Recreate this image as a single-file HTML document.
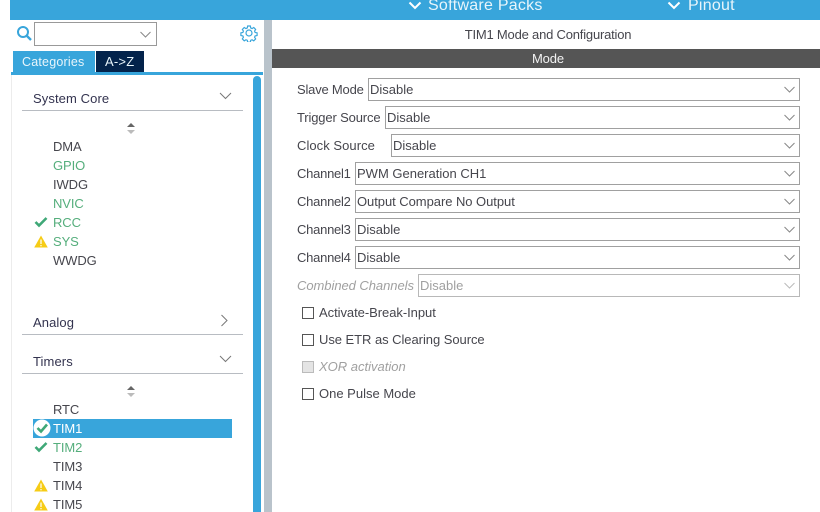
<!DOCTYPE html>
<html><head><meta charset="utf-8">
<style>
html,body{margin:0;padding:0;background:#fff}
#p{position:relative;width:820px;height:512px;overflow:hidden;background:#fff;font-family:"Liberation Sans",sans-serif;font-size:13px;color:#46464d;letter-spacing:-.1px}
#p div,#p svg{position:absolute}
.t{white-space:nowrap;line-height:16px;margin-top:1px}
.sel{left:0;height:21px;border:1px solid #a0a0a0;background:#fff;box-sizing:border-box}
.sv{white-space:nowrap;line-height:16px;color:#46464d;letter-spacing:0;margin-top:1px}
.g{color:#55ae7c}
.h{color:#33334f;font-size:13px;letter-spacing:.1px;margin-top:0}
.top{margin-top:0;font-size:16px;color:#e8f5fb;letter-spacing:.25px}
.ln{left:22px;width:221px;height:1px;background:#b8bcc2}
.cb{left:302px;width:12px;height:12px;border:1px solid #555;box-sizing:border-box;background:#fff}
</style></head><body><div id="p">
<div style="left:10px;top:0;width:810px;height:20px;background:#38a5db"></div>
<svg style="left:408px;top:1px" width="14" height="10"><path d="M1.5 1.5L7 7L12.5 1.5" fill="none" stroke="#fff" stroke-width="2"/></svg>
<div class="t top" style="left:428px;top:-2px">Software Packs</div>
<svg style="left:667px;top:1px" width="14" height="10"><path d="M1.5 1.5L7 7L12.5 1.5" fill="none" stroke="#fff" stroke-width="2"/></svg>
<div class="t top" style="left:688px;top:-2px">Pinout</div>

<svg style="left:16px;top:25px" width="17" height="17"><circle cx="7" cy="7" r="5" fill="none" stroke="#38a5db" stroke-width="2"/><path d="M10.5 10.5L15 15" stroke="#38a5db" stroke-width="2.4"/></svg>
<div style="left:34px;top:22px;width:123px;height:24px;border:1px solid #999;box-sizing:border-box"></div>
<svg style="left:140px;top:30px" width="12" height="8"><path d="M.5 2L5.5 7L10.5 2" fill="none" stroke="#888" stroke-width="1"/></svg>
<svg style="left:240px;top:24px" width="18" height="18" viewBox="0 0 18 18"><circle cx="9" cy="9" r="3" fill="none" stroke="#38a5db" stroke-width="1.2"/><path d="M7.5 1.2h3l.4 2.2 1.5.7 1.9-1.2 2.1 2.1-1.2 1.9.6 1.5 2.2.4v0 3l-2.2.4-.6 1.5 1.2 1.9-2.1 2.1-1.9-1.2-1.5.6-.4 2.2h-3l-.4-2.2-1.5-.6-1.9 1.2-2.1-2.1 1.2-1.9-.6-1.5-2.2-.4v-3l2.2-.4.6-1.5-1.2-1.9 2.1-2.1 1.9 1.2 1.5-.7z" transform="translate(.9 .9) scale(.9)" fill="none" stroke="#38a5db" stroke-width="1.3"/></svg>

<div style="left:13px;top:51px;width:82px;height:21px;background:#38a5db"></div>
<div class="t" style="left:22px;top:53px;color:#e8f5fb;font-size:12.5px;letter-spacing:.2px">Categories</div>
<div style="left:96px;top:51px;width:48px;height:21px;background:#03234b"></div>
<div class="t" style="left:105px;top:53px;color:#e8f5fb;letter-spacing:.2px">A-&gt;Z</div>
<div style="left:11px;top:72px;width:252px;height:3px;background:#38a5db"></div>
<div style="left:11px;top:75px;width:1px;height:437px;background:#ececec"></div>
<div style="left:253px;top:76px;width:8px;height:436px;background:#38a5db;border-radius:4px 4px 0 0"></div>
<div style="left:264px;top:20px;width:8px;height:492px;background:#b9c3cb"></div>

<div class="t h" style="left:33px;top:91px">System Core</div>
<svg style="left:219px;top:92px" width="13" height="9"><path d="M1 1L6.5 6.5L12 1" fill="none" stroke="#777" stroke-width="1"/></svg>
<div class="ln" style="top:110px"></div>
<svg style="left:126px;top:122px" width="10" height="13"><path d="M1 5L5 1L9 5z" fill="#666"/><path d="M1 8L5 12L9 8z" fill="#bbb"/></svg>
<div class="t" style="left:53px;top:138px">DMA</div>
<div class="t g" style="left:53px;top:157px">GPIO</div>
<div class="t" style="left:53px;top:176px">IWDG</div>
<div class="t g" style="left:53px;top:195px">NVIC</div>
<div class="t g" style="left:53px;top:214px">RCC</div>
<div class="t g" style="left:53px;top:233px">SYS</div>
<div class="t" style="left:53px;top:252px">WWDG</div>
<svg style="left:34px;top:216px" width="14" height="12"><path d="M1.5 6L5 9.5L12.5 2" fill="none" stroke="#3fa877" stroke-width="2.6"/></svg>
<svg style="left:34px;top:235px" width="14" height="13"><path d="M7 .5L13.8 12.5H.2z" fill="#f6cc16"/><rect x="6.4" y="4.5" width="1.2" height="4.5" fill="#fff"/><rect x="6.4" y="10" width="1.2" height="1.3" fill="#fff"/></svg>

<div class="t h" style="left:33px;top:315px">Analog</div>
<svg style="left:220px;top:314px" width="9" height="13"><path d="M1.5 1L7 6.5L1.5 12" fill="none" stroke="#777" stroke-width="1"/></svg>
<div class="ln" style="top:334px"></div>
<div class="t h" style="left:33px;top:354px">Timers</div>
<svg style="left:219px;top:355px" width="13" height="9"><path d="M1 1L6.5 6.5L12 1" fill="none" stroke="#777" stroke-width="1"/></svg>
<div class="ln" style="top:373px"></div>
<svg style="left:126px;top:385px" width="10" height="13"><path d="M1 5L5 1L9 5z" fill="#666"/><path d="M1 8L5 12L9 8z" fill="#bbb"/></svg>
<div class="t" style="left:53px;top:401px">RTC</div>
<div style="left:33px;top:419px;width:199px;height:19px;background:#38a5db"></div>
<svg style="left:33px;top:419px" width="18" height="18"><circle cx="9" cy="9" r="8.5" fill="#fff"/><path d="M4.5 9L8 12.5L14 5.5" fill="none" stroke="#3fa877" stroke-width="2.6"/></svg>
<div class="t" style="left:53px;top:420px;color:#fff">TIM1</div>
<svg style="left:34px;top:441px" width="14" height="12"><path d="M1.5 6L5 9.5L12.5 2" fill="none" stroke="#3fa877" stroke-width="2.6"/></svg>
<div class="t g" style="left:53px;top:439px">TIM2</div>
<div class="t" style="left:53px;top:458px">TIM3</div>
<svg style="left:34px;top:479px" width="14" height="13"><path d="M7 .5L13.8 12.5H.2z" fill="#f6cc16"/><rect x="6.4" y="4.5" width="1.2" height="4.5" fill="#fff"/><rect x="6.4" y="10" width="1.2" height="1.3" fill="#fff"/></svg>
<div class="t" style="left:53px;top:477px">TIM4</div>
<svg style="left:34px;top:498px" width="14" height="13"><path d="M7 .5L13.8 12.5H.2z" fill="#f6cc16"/><rect x="6.4" y="4.5" width="1.2" height="4.5" fill="#fff"/><rect x="6.4" y="10" width="1.2" height="1.3" fill="#fff"/></svg>
<div class="t" style="left:53px;top:496px">TIM5</div>

<div class="t" style="left:272px;top:26px;width:552px;text-align:center;letter-spacing:-.2px">TIM1 Mode and Configuration</div>
<div style="left:272px;top:49px;width:548px;height:19px;background:#555"></div>
<div class="t" style="left:272px;top:50px;width:552px;text-align:center;color:#f2f2f2">Mode</div>

<div class="t" style="left:297px;top:81px;letter-spacing:-.2px">Slave Mode</div>
<div class="sel" style="left:368px;top:78px;width:432px;height:23px"></div>
<div class="sv" style="left:370px;top:81px">Disable</div>
<div class="t" style="left:297px;top:109px;letter-spacing:-.15px">Trigger Source</div>
<div class="sel" style="left:385px;top:106px;width:415px;height:23px"></div>
<div class="sv" style="left:387px;top:109px">Disable</div>
<div class="t" style="left:297px;top:137px;letter-spacing:.05px">Clock Source</div>
<div class="sel" style="left:391px;top:134px;width:409px;height:23px"></div>
<div class="sv" style="left:393px;top:137px">Disable</div>
<div class="t" style="left:297px;top:165px;letter-spacing:-.25px">Channel1</div>
<div class="sel" style="left:355px;top:162px;width:445px;height:23px"></div>
<div class="sv" style="left:357px;top:165px">PWM Generation CH1</div>
<div class="t" style="left:297px;top:193px;letter-spacing:-.25px">Channel2</div>
<div class="sel" style="left:355px;top:190px;width:445px;height:23px"></div>
<div class="sv" style="left:357px;top:193px;letter-spacing:-.05px">Output Compare No Output</div>
<div class="t" style="left:297px;top:221px;letter-spacing:-.25px">Channel3</div>
<div class="sel" style="left:355px;top:218px;width:445px;height:23px"></div>
<div class="sv" style="left:357px;top:221px">Disable</div>
<div class="t" style="left:297px;top:249px;letter-spacing:-.25px">Channel4</div>
<div class="sel" style="left:355px;top:246px;width:445px;height:23px"></div>
<div class="sv" style="left:357px;top:249px">Disable</div>
<div class="t" style="left:297px;top:277px;color:#a0a0a0;font-style:italic;letter-spacing:-.05px">Combined Channels</div>
<div class="sel" style="left:418px;top:274px;width:382px;height:23px;border-color:#b8b8b8"></div>
<div class="sv" style="left:420px;top:277px;color:#a0a0a0">Disable</div>

<svg style="left:784px;top:85px" width="12" height="8"><path d="M.5 2L5.5 7L10.5 2" fill="none" stroke="#888"/></svg>
<svg style="left:784px;top:113px" width="12" height="8"><path d="M.5 2L5.5 7L10.5 2" fill="none" stroke="#888"/></svg>
<svg style="left:784px;top:141px" width="12" height="8"><path d="M.5 2L5.5 7L10.5 2" fill="none" stroke="#888"/></svg>
<svg style="left:784px;top:169px" width="12" height="8"><path d="M.5 2L5.5 7L10.5 2" fill="none" stroke="#888"/></svg>
<svg style="left:784px;top:197px" width="12" height="8"><path d="M.5 2L5.5 7L10.5 2" fill="none" stroke="#888"/></svg>
<svg style="left:784px;top:225px" width="12" height="8"><path d="M.5 2L5.5 7L10.5 2" fill="none" stroke="#888"/></svg>
<svg style="left:784px;top:253px" width="12" height="8"><path d="M.5 2L5.5 7L10.5 2" fill="none" stroke="#888"/></svg>
<svg style="left:784px;top:281px" width="12" height="8"><path d="M.5 2L5.5 7L10.5 2" fill="none" stroke="#bbb"/></svg>

<div class="cb" style="top:307px"></div>
<div class="t" style="left:319px;top:304px;letter-spacing:-.05px">Activate-Break-Input</div>
<div class="cb" style="top:334px"></div>
<div class="t" style="left:319px;top:331px;letter-spacing:-.05px">Use ETR as Clearing Source</div>
<div class="cb" style="top:361px;background:#e4e4e4;border-color:#bbb"></div>
<div class="t" style="left:319px;top:358px;color:#a0a0a0;font-style:italic;letter-spacing:0">XOR activation</div>
<div class="cb" style="top:388px"></div>
<div class="t" style="left:319px;top:385px;letter-spacing:0">One Pulse Mode</div>
</div></body></html>
